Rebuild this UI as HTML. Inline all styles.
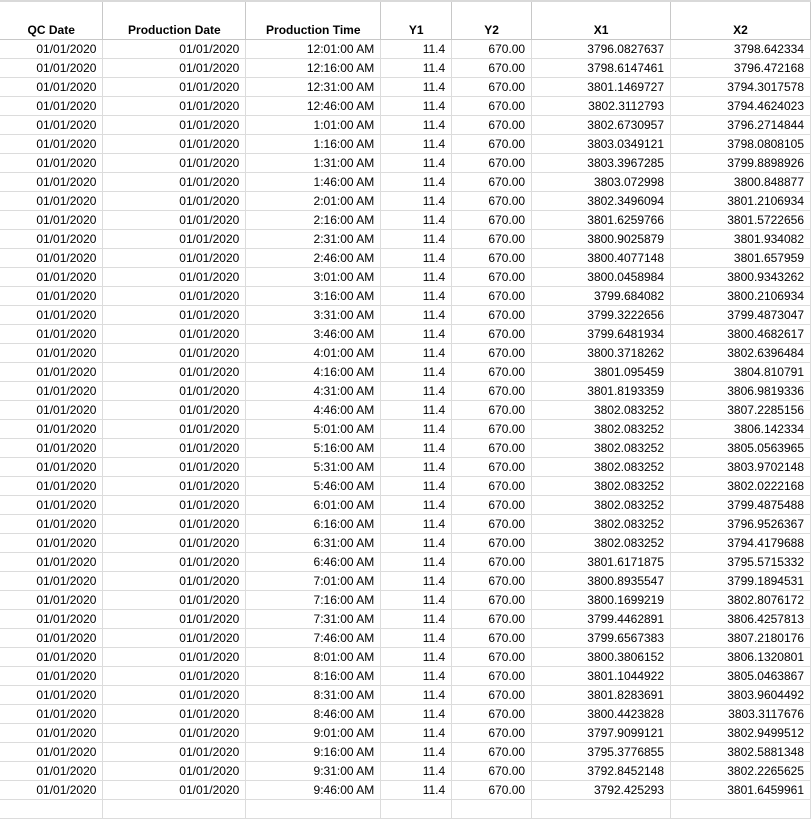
<!DOCTYPE html>
<html><head><style>
body{margin:0;background:#fff;}
.top{height:2px;background:#d9d9d9;}
table{border-collapse:collapse;table-layout:fixed;font-family:"Liberation Sans",sans-serif;font-size:12px;color:#000;}
th{height:35px;vertical-align:bottom;padding:0 0 2px 0;font-weight:bold;text-align:center;border-right:1px solid #c8c8c8;border-bottom:1px solid #c8c8c8;font-size:12px;}
td{height:18px;padding:0 6px 0 0;text-align:right;border-right:1px solid #dcdcdc;border-bottom:1px solid #dcdcdc;white-space:nowrap;overflow:hidden;line-height:18px;}
</style></head><body><div class="top"></div>
<table>
<colgroup><col style="width:103px"><col style="width:143px"><col style="width:135px"><col style="width:71px"><col style="width:80px"><col style="width:139px"><col style="width:140px"></colgroup>
<tr><th>QC Date</th><th>Production Date</th><th>Production Time</th><th>Y1</th><th>Y2</th><th>X1</th><th>X2</th></tr>
<tr><td>01/01/2020</td><td>01/01/2020</td><td>12:01:00 AM</td><td>11.4</td><td>670.00</td><td>3796.0827637</td><td>3798.642334</td></tr>
<tr><td>01/01/2020</td><td>01/01/2020</td><td>12:16:00 AM</td><td>11.4</td><td>670.00</td><td>3798.6147461</td><td>3796.472168</td></tr>
<tr><td>01/01/2020</td><td>01/01/2020</td><td>12:31:00 AM</td><td>11.4</td><td>670.00</td><td>3801.1469727</td><td>3794.3017578</td></tr>
<tr><td>01/01/2020</td><td>01/01/2020</td><td>12:46:00 AM</td><td>11.4</td><td>670.00</td><td>3802.3112793</td><td>3794.4624023</td></tr>
<tr><td>01/01/2020</td><td>01/01/2020</td><td>1:01:00 AM</td><td>11.4</td><td>670.00</td><td>3802.6730957</td><td>3796.2714844</td></tr>
<tr><td>01/01/2020</td><td>01/01/2020</td><td>1:16:00 AM</td><td>11.4</td><td>670.00</td><td>3803.0349121</td><td>3798.0808105</td></tr>
<tr><td>01/01/2020</td><td>01/01/2020</td><td>1:31:00 AM</td><td>11.4</td><td>670.00</td><td>3803.3967285</td><td>3799.8898926</td></tr>
<tr><td>01/01/2020</td><td>01/01/2020</td><td>1:46:00 AM</td><td>11.4</td><td>670.00</td><td>3803.072998</td><td>3800.848877</td></tr>
<tr><td>01/01/2020</td><td>01/01/2020</td><td>2:01:00 AM</td><td>11.4</td><td>670.00</td><td>3802.3496094</td><td>3801.2106934</td></tr>
<tr><td>01/01/2020</td><td>01/01/2020</td><td>2:16:00 AM</td><td>11.4</td><td>670.00</td><td>3801.6259766</td><td>3801.5722656</td></tr>
<tr><td>01/01/2020</td><td>01/01/2020</td><td>2:31:00 AM</td><td>11.4</td><td>670.00</td><td>3800.9025879</td><td>3801.934082</td></tr>
<tr><td>01/01/2020</td><td>01/01/2020</td><td>2:46:00 AM</td><td>11.4</td><td>670.00</td><td>3800.4077148</td><td>3801.657959</td></tr>
<tr><td>01/01/2020</td><td>01/01/2020</td><td>3:01:00 AM</td><td>11.4</td><td>670.00</td><td>3800.0458984</td><td>3800.9343262</td></tr>
<tr><td>01/01/2020</td><td>01/01/2020</td><td>3:16:00 AM</td><td>11.4</td><td>670.00</td><td>3799.684082</td><td>3800.2106934</td></tr>
<tr><td>01/01/2020</td><td>01/01/2020</td><td>3:31:00 AM</td><td>11.4</td><td>670.00</td><td>3799.3222656</td><td>3799.4873047</td></tr>
<tr><td>01/01/2020</td><td>01/01/2020</td><td>3:46:00 AM</td><td>11.4</td><td>670.00</td><td>3799.6481934</td><td>3800.4682617</td></tr>
<tr><td>01/01/2020</td><td>01/01/2020</td><td>4:01:00 AM</td><td>11.4</td><td>670.00</td><td>3800.3718262</td><td>3802.6396484</td></tr>
<tr><td>01/01/2020</td><td>01/01/2020</td><td>4:16:00 AM</td><td>11.4</td><td>670.00</td><td>3801.095459</td><td>3804.810791</td></tr>
<tr><td>01/01/2020</td><td>01/01/2020</td><td>4:31:00 AM</td><td>11.4</td><td>670.00</td><td>3801.8193359</td><td>3806.9819336</td></tr>
<tr><td>01/01/2020</td><td>01/01/2020</td><td>4:46:00 AM</td><td>11.4</td><td>670.00</td><td>3802.083252</td><td>3807.2285156</td></tr>
<tr><td>01/01/2020</td><td>01/01/2020</td><td>5:01:00 AM</td><td>11.4</td><td>670.00</td><td>3802.083252</td><td>3806.142334</td></tr>
<tr><td>01/01/2020</td><td>01/01/2020</td><td>5:16:00 AM</td><td>11.4</td><td>670.00</td><td>3802.083252</td><td>3805.0563965</td></tr>
<tr><td>01/01/2020</td><td>01/01/2020</td><td>5:31:00 AM</td><td>11.4</td><td>670.00</td><td>3802.083252</td><td>3803.9702148</td></tr>
<tr><td>01/01/2020</td><td>01/01/2020</td><td>5:46:00 AM</td><td>11.4</td><td>670.00</td><td>3802.083252</td><td>3802.0222168</td></tr>
<tr><td>01/01/2020</td><td>01/01/2020</td><td>6:01:00 AM</td><td>11.4</td><td>670.00</td><td>3802.083252</td><td>3799.4875488</td></tr>
<tr><td>01/01/2020</td><td>01/01/2020</td><td>6:16:00 AM</td><td>11.4</td><td>670.00</td><td>3802.083252</td><td>3796.9526367</td></tr>
<tr><td>01/01/2020</td><td>01/01/2020</td><td>6:31:00 AM</td><td>11.4</td><td>670.00</td><td>3802.083252</td><td>3794.4179688</td></tr>
<tr><td>01/01/2020</td><td>01/01/2020</td><td>6:46:00 AM</td><td>11.4</td><td>670.00</td><td>3801.6171875</td><td>3795.5715332</td></tr>
<tr><td>01/01/2020</td><td>01/01/2020</td><td>7:01:00 AM</td><td>11.4</td><td>670.00</td><td>3800.8935547</td><td>3799.1894531</td></tr>
<tr><td>01/01/2020</td><td>01/01/2020</td><td>7:16:00 AM</td><td>11.4</td><td>670.00</td><td>3800.1699219</td><td>3802.8076172</td></tr>
<tr><td>01/01/2020</td><td>01/01/2020</td><td>7:31:00 AM</td><td>11.4</td><td>670.00</td><td>3799.4462891</td><td>3806.4257813</td></tr>
<tr><td>01/01/2020</td><td>01/01/2020</td><td>7:46:00 AM</td><td>11.4</td><td>670.00</td><td>3799.6567383</td><td>3807.2180176</td></tr>
<tr><td>01/01/2020</td><td>01/01/2020</td><td>8:01:00 AM</td><td>11.4</td><td>670.00</td><td>3800.3806152</td><td>3806.1320801</td></tr>
<tr><td>01/01/2020</td><td>01/01/2020</td><td>8:16:00 AM</td><td>11.4</td><td>670.00</td><td>3801.1044922</td><td>3805.0463867</td></tr>
<tr><td>01/01/2020</td><td>01/01/2020</td><td>8:31:00 AM</td><td>11.4</td><td>670.00</td><td>3801.8283691</td><td>3803.9604492</td></tr>
<tr><td>01/01/2020</td><td>01/01/2020</td><td>8:46:00 AM</td><td>11.4</td><td>670.00</td><td>3800.4423828</td><td>3803.3117676</td></tr>
<tr><td>01/01/2020</td><td>01/01/2020</td><td>9:01:00 AM</td><td>11.4</td><td>670.00</td><td>3797.9099121</td><td>3802.9499512</td></tr>
<tr><td>01/01/2020</td><td>01/01/2020</td><td>9:16:00 AM</td><td>11.4</td><td>670.00</td><td>3795.3776855</td><td>3802.5881348</td></tr>
<tr><td>01/01/2020</td><td>01/01/2020</td><td>9:31:00 AM</td><td>11.4</td><td>670.00</td><td>3792.8452148</td><td>3802.2265625</td></tr>
<tr><td>01/01/2020</td><td>01/01/2020</td><td>9:46:00 AM</td><td>11.4</td><td>670.00</td><td>3792.425293</td><td>3801.6459961</td></tr>
<tr><td>&nbsp;</td><td></td><td></td><td></td><td></td><td></td><td></td></tr>
</table></body></html>
